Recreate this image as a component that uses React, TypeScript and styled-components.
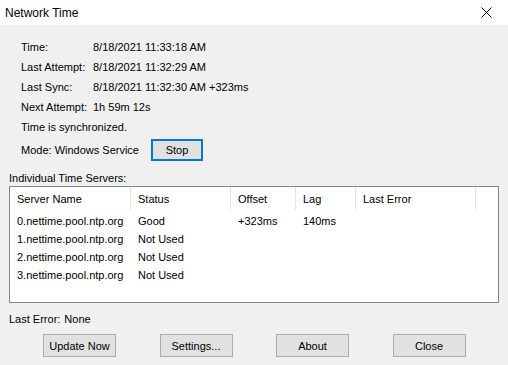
import { Fragment } from "react";
import styled, { createGlobalStyle } from "styled-components";

const GlobalStyle = createGlobalStyle`
  html, body {
    margin: 0;
    padding: 0;
    background: #f0f0f0;
  }
  body {
    font-family: "Liberation Sans", Arial, sans-serif;
    font-size: 11px;
    color: #000;
  }
`;

const Window = styled.div`
  width: 508px;
  height: 365px;
  background: #f0f0f0;
  display: flex;
  flex-direction: column;
  overflow: hidden;
`;

const TitleBar = styled.div`
  height: 25px;
  background: #fff;
  display: flex;
  align-items: center;
  justify-content: space-between;
  padding-left: 5px;
  font-size: 12px;
`;

const CloseBox = styled.div`
  width: 46px;
  height: 25px;
  display: flex;
  align-items: center;
  justify-content: center;
  margin-right: -1px;
`;

const Body = styled.div`
  padding: 12px 9px 0 9px;
  display: flex;
  flex-direction: column;
`;

const InfoGrid = styled.div`
  margin-left: 12px;
  display: grid;
  grid-template-columns: 72px auto;
  grid-auto-rows: 20px;
  align-items: center;
`;

const FullRow = styled.div`
  grid-column: 1 / span 2;
  height: 21px;
  display: flex;
  align-items: center;
`;

const ModeRow = styled.div`
  margin-left: 12px;
  margin-top: 2px;
  display: flex;
  align-items: center;
  height: 22px;
  gap: 12px;
`;

const Button = styled.button<{ $focused?: boolean }>`
  font-family: "Liberation Sans", Arial, sans-serif;
  font-size: 11px;
  color: #000;
  background: #e1e1e1;
  border: ${(p) => (p.$focused ? "2px solid #0078d7" : "1px solid #adadad")};
  width: ${(p) => (p.$focused ? "52px" : "73px")};
  height: ${(p) => (p.$focused ? "22px" : "23px")};
  padding: 0;
  box-sizing: border-box;
  border-radius: 0;
`;

const GroupLabel = styled.div`
  margin-top: 8px;
  height: 17px;
  display: flex;
  align-items: center;
`;

const ListBox = styled.div`
  height: 117px;
  background: #fff;
  border: 1px solid #828790;
  box-sizing: border-box;
  display: flex;
  flex-direction: column;
`;

const HeaderRow = styled.div`
  display: flex;
  height: 25px;
  align-items: stretch;
`;

const HeaderCell = styled.div<{ $w: number }>`
  width: ${(p) => p.$w}px;
  padding-left: 7px;
  box-sizing: border-box;
  display: flex;
  align-items: center;
  border-right: 1px solid #e5e5e5;
  height: 23px;
  padding-top: 1px;
`;

const Row = styled.div`
  display: flex;
  height: 18px;
  align-items: center;
`;

const Cell = styled.div<{ $w: number }>`
  width: ${(p) => p.$w}px;
  padding-left: 7px;
  box-sizing: border-box;
  white-space: nowrap;
`;

const StatusLine = styled.div`
  margin-top: 7px;
  height: 18px;
  display: flex;
  align-items: center;
  gap: 4px;
`;

const ButtonBar = styled.div`
  margin-top: 6px;
  padding-left: 34px;
  display: flex;
  gap: 43.5px;
`;

const columns = [
  { name: "Server Name", w: 121 },
  { name: "Status", w: 100 },
  { name: "Offset", w: 65 },
  { name: "Lag", w: 60 },
  { name: "Last Error", w: 120 },
];

const servers = [
  { name: "0.nettime.pool.ntp.org", status: "Good", offset: "+323ms", lag: "140ms", error: "" },
  { name: "1.nettime.pool.ntp.org", status: "Not Used", offset: "", lag: "", error: "" },
  { name: "2.nettime.pool.ntp.org", status: "Not Used", offset: "", lag: "", error: "" },
  { name: "3.nettime.pool.ntp.org", status: "Not Used", offset: "", lag: "", error: "" },
];

const info = [
  ["Time:", "8/18/2021 11:33:18 AM"],
  ["Last Attempt:", "8/18/2021 11:32:29 AM"],
  ["Last Sync:", "8/18/2021 11:32:30 AM +323ms"],
  ["Next Attempt:", "1h 59m 12s"],
];

const App = () => {
  return (
    <Window>
      <GlobalStyle />
      <TitleBar>
        <span>Network Time</span>
        <CloseBox>
          <svg width="11" height="11" viewBox="0 0 11 11">
            <path d="M0.5 0.5 L10.5 10.5 M10.5 0.5 L0.5 10.5" stroke="#000" strokeWidth="1" />
          </svg>
        </CloseBox>
      </TitleBar>
      <Body>
        <InfoGrid>
          {info.map(([label, value]) => (
            <Fragment key={label}>
              <span>{label}</span>
              <span>{value}</span>
            </Fragment>
          ))}
          <FullRow>Time is synchronized.</FullRow>
        </InfoGrid>
        <ModeRow>
          <span>Mode: Windows Service</span>
          <Button $focused>Stop</Button>
        </ModeRow>
        <GroupLabel>Individual Time Servers:</GroupLabel>
        <ListBox>
          <HeaderRow>
            {columns.map((c) => (
              <HeaderCell key={c.name} $w={c.w}>
                {c.name}
              </HeaderCell>
            ))}
          </HeaderRow>
          {servers.map((s) => (
            <Row key={s.name}>
              <Cell $w={121}>{s.name}</Cell>
              <Cell $w={100}>{s.status}</Cell>
              <Cell $w={65}>{s.offset}</Cell>
              <Cell $w={60}>{s.lag}</Cell>
              <Cell $w={120}>{s.error}</Cell>
            </Row>
          ))}
        </ListBox>
        <StatusLine>
          <span>Last Error:</span>
          <span>None</span>
        </StatusLine>
        <ButtonBar>
          <Button>Update Now</Button>
          <Button>Settings...</Button>
          <Button>About</Button>
          <Button>Close</Button>
        </ButtonBar>
      </Body>
    </Window>
  );
};

export default App;
